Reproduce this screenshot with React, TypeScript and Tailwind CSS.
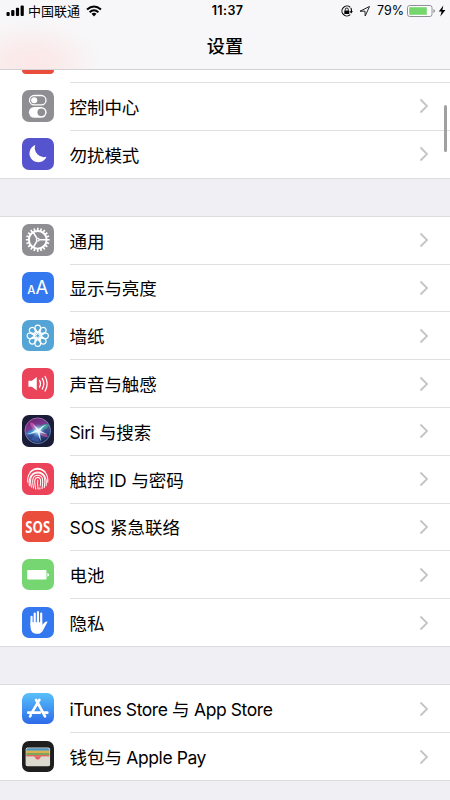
import type { ReactNode } from "react";

type Row = {
  label: string;
  icon: ReactNode;
  bg: string;
};

const gearTeeth = Array.from({ length: 20 }, (_, i) => i * 18);
const petals = Array.from({ length: 8 }, (_, i) => i * 45);

const ControlIcon = () => (
  <svg viewBox="0 0 32 32" className="h-full w-full" fill="none">
    <rect x="7.6" y="5.6" width="16.8" height="9.6" rx="4.8" stroke="#fff" strokeWidth="1.3" />
    <circle cx="12.4" cy="10.4" r="3.1" fill="#fff" />
    <rect x="7" y="17.2" width="18" height="11" rx="5.5" fill="#fff" />
    <circle cx="19.6" cy="22.7" r="3.9" fill="#8e8e93" />
  </svg>
);

const MoonIcon = () => (
  <svg viewBox="0 0 32 32" className="h-full w-full">
    <path d="M13.5 7.2A9 9 0 1 0 24.9 19.1A9.4 9.4 0 0 1 13.5 7.2Z" fill="#fff" />
  </svg>
);

const GearIcon = () => (
  <svg viewBox="0 0 32 32" className="h-full w-full" fill="none" stroke="#fff">
    <circle cx="16" cy="16" r="9" strokeWidth="2" />
    {gearTeeth.map((deg) => (
      <path key={deg} d="M16 3.9V7" strokeWidth="1.7" transform={`rotate(${deg} 16 16)`} />
    ))}
    <circle cx="16" cy="16" r="1.4" strokeWidth="1.4" />
    <path d="M17.5 16H25M15 14.4L11.4 8.2M15 17.6L11.4 23.8" strokeWidth="1.7" />
  </svg>
);

const TextSizeIcon = () => (
  <span className="flex h-full w-full items-baseline justify-center pt-[2px] leading-[26px] text-white">
    <span className="text-[11.5px] font-medium">A</span>
    <span className="text-[18.5px]">A</span>
  </span>
);

const FlowerIcon = () => (
  <svg viewBox="0 0 32 32" className="h-full w-full" fill="none" stroke="#fff" strokeWidth="1.2">
    {petals.map((deg) => (
      <ellipse key={deg} cx="16" cy="9" rx="3" ry="3.8" transform={`rotate(${deg} 16 16)`} />
    ))}
    {petals.map((deg) => (
      <circle key={deg} cx="16" cy="12.6" r="1.7" strokeWidth="0.8" transform={`rotate(${deg + 22.5} 16 16)`} />
    ))}
  </svg>
);

const SoundIcon = () => (
  <svg viewBox="0 0 32 32" className="h-full w-full" fill="none" stroke="#fff" strokeWidth="1.3" strokeLinecap="round">
    <path d="M6.5 13H10L15 9.2V22.8L10 19H6.5Z" fill="#fff" stroke="none" />
    <path d="M17.8 12.6Q19.8 16 17.8 19.4M20.6 10.6Q23.7 16 20.6 21.4M23.4 8.6Q27.7 16 23.4 23.4" />
  </svg>
);

const SiriIcon = () => (
  <svg viewBox="0 0 32 32" className="h-full w-full">
    <defs>
      <radialGradient id="siri-core">
        <stop offset="0" stopColor="#fff" />
        <stop offset="0.3" stopColor="#bff4ff" stopOpacity="0.8" />
        <stop offset="1" stopColor="#4a8fd8" stopOpacity="0" />
      </radialGradient>
      <linearGradient id="siri-orb" x1="0.3" y1="0" x2="0.6" y2="1">
        <stop offset="0" stopColor="#6a2470" />
        <stop offset="0.4" stopColor="#7d3c96" />
        <stop offset="0.65" stopColor="#2f4f8e" />
        <stop offset="1" stopColor="#1a2450" />
      </linearGradient>
      <linearGradient id="siri-ring" x1="0" y1="0" x2="1" y2="1">
        <stop offset="0" stopColor="#c45fae" />
        <stop offset="0.5" stopColor="#7f87b6" />
        <stop offset="1" stopColor="#4b7fa0" />
      </linearGradient>
    </defs>
    <circle cx="16" cy="16" r="13" fill="url(#siri-orb)" stroke="url(#siri-ring)" strokeWidth="0.9" />
    <path d="M16 16Q19 7 27.5 10Q28 15 16 16Z" fill="#2fae9c" opacity="0.75" />
    <path d="M16 16Q8 13 4 19Q7 23 16 16Z" fill="#2794d5" opacity="0.8" />
    <path d="M16 16Q12 6 8 8Q9 14 16 16Z" fill="#d04fae" opacity="0.8" />
    <path d="M16 16Q24 17 26.5 22Q21 24 16 16Z" fill="#be4a9e" opacity="0.75" />
    <path d="M16 16Q12 21 9 25Q14 28 18 28Z" fill="#3a63b5" opacity="0.7" />
    <circle cx="16" cy="16" r="7.5" fill="url(#siri-core)" />
    <path d="M5 19.6Q12 17 15 14.8L10.5 9L17 14.4Q20 11 25 10Q20.5 12.8 18.4 16L26 19.8L17.9 17.5L19.3 27Q16.7 22 15.8 17.3Q10 19.2 5 19.6Z" fill="#effcff" opacity="0.85" />
  </svg>
);

const TouchIdIcon = () => (
  <svg viewBox="0 0 32 32" className="h-full w-full" fill="none" stroke="#fff" strokeWidth="1.05" strokeLinecap="round">
    <path d="M8.2 9.2Q16 1.8 23.8 9.2" />
    <path d="M5.8 19.5C4.2 1.8 27.8 1.8 26.2 19.5" />
    <path d="M7.5 23C5 4.4 27 4.4 24.5 23" />
    <path d="M9.5 24.5C8.5 20 8.3 18 9 15.2C11 8.3 21 8.3 22.9 15.2C23.5 18 23.2 22 22.6 25" />
    <path d="M11.7 25.6C10.6 20 10.6 18 11.2 16C12.5 11.2 19.5 11.2 20.8 16C21.3 19 21 22.5 20.4 26" />
    <path d="M14 26.5C12.9 22 12.7 19 13.2 17C14 13.8 18 13.8 18.8 17C19.2 20 18.8 22 18.5 23M18.2 25.2V26.5" />
    <path d="M16 17.3Q15.4 21 16.4 26.5" />
  </svg>
);

const SosIcon = () => (
  <span className="flex h-full w-full items-center justify-center font-['Open_Sans','Roboto',sans-serif] text-white">
    <span className="scale-x-[0.84] text-[15.5px] leading-6 font-bold">SOS</span>
  </span>
);

const BatteryIcon = () => (
  <svg viewBox="0 0 32 32" className="h-full w-full" fill="#fff">
    <rect x="5.3" y="11.3" width="19.6" height="9.6" rx="0.8" />
    <path d="M25.8 14.2Q27.5 14.6 27.5 16.1T25.8 18Z" />
  </svg>
);

const HandIcon = () => (
  <svg viewBox="0 0 32 32" className="h-full w-full" fill="none" stroke="#fff" strokeLinecap="round">
    <path d="M9.7 10V18M12.9 6.6V17M16.2 5.2V17M19.5 6.8V18" strokeWidth="2.2" />
    <path d="M8.6 15.5H20.6V18.3L23.2 15.5Q24.7 14.1 26 15.1L21.8 22.8Q19.7 27.3 15.6 27.3C10.5 27.3 8.6 24 8.6 19Z" fill="#fff" stroke="none" />
  </svg>
);

const AppStoreIcon = () => (
  <svg viewBox="0 0 32 32" className="h-full w-full" fill="none" stroke="#fff" strokeWidth="2.7" strokeLinecap="round">
    <path d="M17.7 7L10 20M14.3 7L23.4 23.7M6.3 20H18.2M22.3 20H25.7M8.9 22.5L8.2 23.7" />
  </svg>
);

const WalletIcon = () => (
  <svg viewBox="0 0 32 32" className="h-full w-full">
    <rect x="3.7" y="6.7" width="24.8" height="19" rx="1.8" fill="#d9d6cc" />
    <path d="M4.3 9Q4.3 7.4 6 7.4H26.2Q27.8 7.4 27.8 9V10H4.3Z" fill="#4b94bd" />
    <path d="M4.3 10H27.8V12.6H4.3Z" fill="#d9b04a" />
    <path d="M4.3 12.2H27.8V14.6H4.3Z" fill="#7ca65a" />
    <path d="M4.3 14.3H27.8V16H4.3Z" fill="#df6660" />
    <path d="M4 15.8H28.2V24Q28.2 25.4 26.7 25.4H5.5Q4 25.4 4 24Z" fill="#dcd9cf" />
    <path d="M12 15.5H20C18.6 16 18.6 18.8 16 18.8S13.4 16 12 15.5Z" fill="#df6660" />
  </svg>
);

const topRows: Row[] = [
  { label: "控制中心", icon: <ControlIcon />, bg: "bg-[#8e8e93]" },
  { label: "勿扰模式", icon: <MoonIcon />, bg: "bg-[#5653ce]" },
];

const mainRows: Row[] = [
  { label: "通用", icon: <GearIcon />, bg: "bg-[#8e8e93]" },
  { label: "显示与亮度", icon: <TextSizeIcon />, bg: "bg-[#3478f0]" },
  { label: "墙纸", icon: <FlowerIcon />, bg: "bg-[#54a5d6]" },
  { label: "声音与触感", icon: <SoundIcon />, bg: "bg-[#eb445a]" },
  { label: "Siri 与搜索", icon: <SiriIcon />, bg: "bg-[#1b1c38]" },
  { label: "触控 ID 与密码", icon: <TouchIdIcon />, bg: "bg-[#eb445a]" },
  { label: "SOS 紧急联络", icon: <SosIcon />, bg: "bg-[#eb4d3d]" },
  { label: "电池", icon: <BatteryIcon />, bg: "bg-[#76d672]" },
  { label: "隐私", icon: <HandIcon />, bg: "bg-[#3478f0]" },
];

const storeRows: Row[] = [
  { label: "iTunes Store 与 App Store", icon: <AppStoreIcon />, bg: "bg-linear-to-b from-[#5ac0f9] to-[#2f69e8]" },
  { label: "钱包与 Apple Pay", icon: <WalletIcon />, bg: "bg-[#1e1e1e]" },
];

// Latin runs are set slightly tighter than the Chinese text around them
function Label({ text }: { text: string }) {
  return (
    <span className="pt-[3px] text-[17.5px] leading-6 whitespace-pre text-black">
      {text.split(/([A-Za-z ]+)/).map((part, idx) => (
        <span key={idx} className={/[A-Za-z]{4}/.test(part) ? "tracking-[-0.42px]" : "tracking-[-0.05px]"}>
          {part}
        </span>
      ))}
    </span>
  );
}

function Group({ rows }: { rows: Row[] }) {
  return (
    <div className="bg-white">
      {rows.map((row, idx) => {
        const last = idx === rows.length - 1;
        return (
          <div key={row.label} className={`flex pl-[22px] ${last ? "h-[46.8px]" : "h-[47.8px]"}`}>
            <div className={`mt-[7.4px] h-[31.5px] w-[31.5px] shrink-0 overflow-hidden rounded-[7px] ${row.bg}`}>
              {row.icon}
            </div>
            <div
              className={`ml-4 flex flex-1 items-center justify-between pr-[21px] ${
                last ? "" : "border-b border-[#dfdfe2]"
              }`}
            >
              <Label text={row.label} />
              <svg viewBox="0 0 10 16" className="h-4 w-[10px]" fill="none" stroke="#c4c4c8" strokeWidth="1.8">
                <path d="M1.5 1.5L8 8L1.5 14.5" />
              </svg>
            </div>
          </div>
        );
      })}
    </div>
  );
}

function StatusBar() {
  return (
    <div className="grid h-[22px] grid-cols-3 items-center pr-1 pl-[6px] text-[12.5px] text-black">
      <div className="flex items-center">
        <svg viewBox="0 0 18 12" className="h-3 w-[18px]">
          <rect x="0.5" y="7" width="3.2" height="4" rx="1" />
          <rect x="5.2" y="5" width="3.2" height="6" rx="1" />
          <rect x="9.9" y="2.8" width="3.2" height="8.2" rx="1" />
          <rect x="14.6" y="0.5" width="3.2" height="10.5" rx="1" />
        </svg>
        <span className="ml-[4px] pt-px text-[13px]">中国联通</span>
        <svg viewBox="0 0 16 12" className="ml-[6px] h-3 w-4" fill="none" stroke="#000" strokeWidth="2">
          <path d="M1 4.5Q8 -1.6 15 4.5M3.6 7.2Q8 3.3 12.4 7.2" />
          <path d="M5.5 8.8Q8 6.8 10.5 8.8L8 11.5Z" fill="#000" stroke="none" />
        </svg>
      </div>
      <span className="pt-px pl-[3px] text-center font-semibold tracking-[0.4px]">11:37</span>
      <div className="flex items-center justify-end">
        <svg viewBox="0 0 14 12" className="h-3 w-[14px]" fill="none" stroke="#000">
          <path d="M10.3 2.3A5 5 0 1 0 10.3 9.7M10.8 3A5 5 0 0 1 11.3 6.8" strokeWidth="1.1" />
          <path d="M9.4 6.3H13L11.2 8.6Z" fill="#000" stroke="none" />
          <rect x="4.3" y="5.4" width="5" height="3.5" rx="0.4" fill="#000" stroke="none" />
          <path d="M5.3 5.6V4.5A1.5 1.5 0 0 1 8.3 4.5V5.6" strokeWidth="0.9" />
        </svg>
        <svg viewBox="0 0 12 12" className="ml-[5px] h-3 w-3" fill="none" stroke="#222" strokeWidth="1" strokeLinejoin="round">
          <path d="M1 6.2L10.5 1.5L6.2 11L6 6.2Z" />
        </svg>
        <span className="ml-[6px] pt-px">79%</span>
        <svg viewBox="0 0 29 12" className="ml-[3px] h-3 w-[29px]">
          <rect x="0.5" y="0.5" width="24.5" height="11" rx="2.2" fill="#fff" stroke="#8f8f94" />
          <rect x="2.2" y="2.2" width="17.6" height="7.6" fill="#75d66d" />
          <path d="M26.4 4.2Q28 4.5 28 6T26.4 7.8Z" fill="#8f8f94" />
        </svg>
        <svg viewBox="0 0 8 12" className="ml-[2px] h-3 w-2">
          <path d="M5.3 0.4L0.8 6.6H3.6L2.3 11.6L7.4 4.9H4.4Z" />
        </svg>
      </div>
    </div>
  );
}

export default function App() {
  return (
    <div className="relative h-[800px] w-[450px] overflow-hidden bg-[#efeff4] font-['Inter','Noto_Sans_CJK_SC',sans-serif]">
      <header className="h-[70px] border-b border-[#d2d2d5] bg-[#f7f7f9] bg-[radial-gradient(ellipse_76px_48px_at_32px_64px,#fce7e7_0%,#faecec_40%,#f8f4f5_75%,#f7f7f9_100%)]">
        <StatusBar />
        <h1 className="pt-3 text-center text-[18.2px] leading-6 font-medium">设置</h1>
      </header>
      <div className="flex h-[13px] bg-white pl-[22px]">
        <div className="h-[4px] w-[31.5px] rounded-b-[7px] bg-[#eb4d3d]" />
        <div className="ml-4 flex-1 border-b border-[#dfdfe2]" />
      </div>
      <Group rows={topRows} />
      <div className="h-[39.2px] border-y border-[#dcdce0]" />
      <Group rows={mainRows} />
      <div className="h-[39.4px] border-y border-[#dcdce0]" />
      <Group rows={storeRows} />
      <div className="border-t border-[#dcdce0]" />
      <div className="absolute top-[105px] right-[3px] h-[47px] w-[3px] rounded-full bg-[#a0a0a2]" />
    </div>
  );
}
